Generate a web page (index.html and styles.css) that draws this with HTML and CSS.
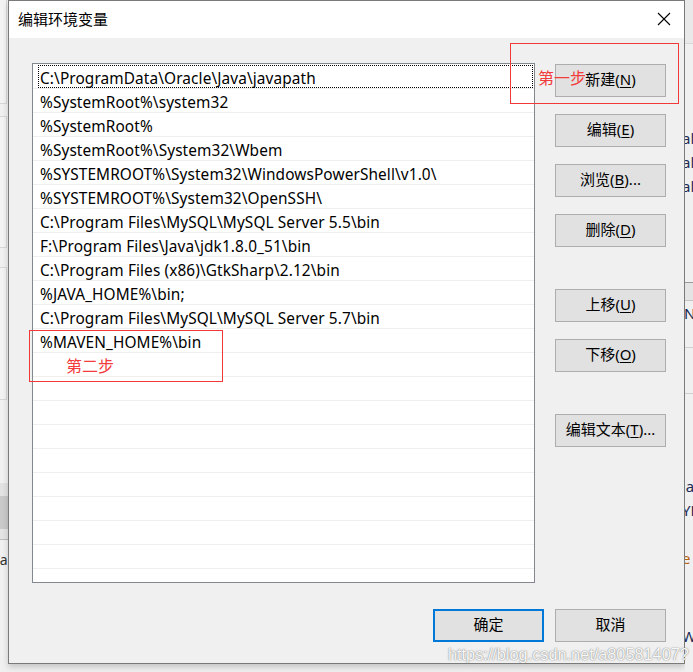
FILE: index.html
```html
<!DOCTYPE html>
<html lang="zh-CN">
<head>
<meta charset="utf-8">
<title>编辑环境变量</title>
<link rel="stylesheet" href="styles.css">
</head>
<body>
<div class="screen">
  <div class="bg-left">
    <div class="l-box l-box1"></div>
    <div class="l-box l-box2"></div>
    <div class="l-box l-box3"></div>
    <div class="l-band-light"></div>
    <div class="l-band-dark"></div>
    <div class="l-band-mid"></div>
    <div class="l-text">Ja</div>
  </div>

  <div class="dialog">
    <div class="titlebar">
      <span class="title">编辑环境变量</span>
      <svg class="close" width="14" height="14" viewBox="0 0 14 14"><path d="M1 1 L13 13 M13 1 L1 13" stroke="#000" stroke-width="1.1" fill="none"/></svg>
    </div>
    <div class="client">
      <div class="main">
        <div class="list">
          <div class="row focus"><div class="cell">C:\ProgramData\Oracle\Java\javapath</div></div>
          <div class="row"><div class="cell">%SystemRoot%\system32</div></div>
          <div class="row"><div class="cell">%SystemRoot%</div></div>
          <div class="row"><div class="cell">%SystemRoot%\System32\Wbem</div></div>
          <div class="row"><div class="cell">%SYSTEMROOT%\System32\WindowsPowerShell\v1.0\</div></div>
          <div class="row"><div class="cell">%SYSTEMROOT%\System32\OpenSSH\</div></div>
          <div class="row"><div class="cell">C:\Program Files\MySQL\MySQL Server 5.5\bin</div></div>
          <div class="row"><div class="cell">F:\Program Files\Java\jdk1.8.0_51\bin</div></div>
          <div class="row"><div class="cell">C:\Program Files (x86)\GtkSharp\2.12\bin</div></div>
          <div class="row"><div class="cell">%JAVA_HOME%\bin;</div></div>
          <div class="row"><div class="cell">C:\Program Files\MySQL\MySQL Server 5.7\bin</div></div>
          <div class="row"><div class="cell">%MAVEN_HOME%\bin</div></div>
          <div class="row"><div class="cell"></div></div>
          <div class="row"><div class="cell"></div></div>
          <div class="row"><div class="cell"></div></div>
          <div class="row"><div class="cell"></div></div>
          <div class="row"><div class="cell"></div></div>
          <div class="row"><div class="cell"></div></div>
          <div class="row"><div class="cell"></div></div>
          <div class="row"><div class="cell"></div></div>
          <div class="row"><div class="cell"></div></div>
          <div class="row"><div class="cell"></div></div>
        </div>
        <div class="btncol">
          <button class="btn">新建(<u>N</u>)</button>
          <button class="btn">编辑(<u>E</u>)</button>
          <button class="btn">浏览(<u>B</u>)...</button>
          <button class="btn">删除(<u>D</u>)</button>
          <button class="btn btn-sep">上移(<u>U</u>)</button>
          <button class="btn">下移(<u>O</u>)</button>
          <button class="btn btn-sep">编辑文本(<u>T</u>)...</button>
        </div>
      </div>
      <div class="footer">
        <button class="btn btn-primary">确定</button>
        <button class="btn">取消</button>
      </div>
    </div>
  </div>

  <div class="bg-right">
    <div class="r-top"></div>
    <div class="r-txt r-al1">al'</div>
    <div class="r-txt">al'</div>
    <div class="r-txt">al'</div>
    <div class="r-line r-line1"></div>
    <div class="r-band"></div>
    <div class="r-txt r-n">N</div>
    <div class="r-line r-line2"></div>
    <div class="r-line r-line3"></div>
    <div class="r-txt r-ja">ja</div>
    <div class="r-txt">YB</div>
    <div class="r-txt r-e">e</div>
    <div class="r-txt r-w">W</div>
  </div>

  <div class="anno anno-rect1"></div>
  <div class="anno-text anno-text1">第一步</div>
  <div class="anno anno-rect2"></div>
  <div class="anno-text anno-text2">第二步</div>
  <div class="watermark">https://blog.csdn.net/a80581407?</div>
</div>
</body>
</html>
```

FILE: styles.css
```css
* { box-sizing: border-box; }

html, body {
  margin: 0;
  padding: 0;
}

body {
  background: #f0f0f0;
  font-family: "Noto Sans", "Noto Sans CJK SC", sans-serif;
  color: #000;
}

.screen {
  position: relative;
  width: 693px;
  height: 672px;
  overflow: hidden;
  display: grid;
  grid-template-columns: 8px 677px 8px;
  align-items: start;
}

/* ---------- background windows ---------- */
.bg-left {
  height: 672px;
  display: flex;
  flex-direction: column;
  background: #f0f0f0;
  overflow: hidden;
}
.l-box {
  border: 1px solid #d6d6d6;
  border-left: none;
  width: 7px;
  background: #f3f3f3;
}
.l-box1 { height: 104px; border-top: none; }
.l-box2 { height: 132px; margin-top: 12px; }
.l-box3 { height: 133px; margin-top: 19px; }
.l-band-light { height: 13px; margin-top: 83px; background: #e2e2e2; }
.l-band-dark { height: 33px; background: #c9c9c9; }
.l-band-mid { height: 11px; background: #e4e4e4; border-bottom: 1px solid #bcbcbc; }
.l-text { font-size: 14px; line-height: 16px; margin-top: 12px; color: #333; margin-left: -4px; }

.bg-right {
  height: 672px;
  display: flex;
  flex-direction: column;
  background: #f0f0f0;
  overflow: hidden;
  font-family: "Noto Sans", sans-serif;
}
.r-top { height: 44px; border-bottom: 1px solid #d8d8d8; background: #e9e9e9; }
.r-txt { font-size: 15px; line-height: 24px; height: 24px; color: #1e2a55; white-space: nowrap; margin-left: -3px; }
.r-al1 { margin-top: 82px; }
.r-line { height: 1px; background: #9a9a9a; }
.r-line1 { margin-top: 84px; }
.r-band { height: 18px; background: #e4e4e4; border-bottom: 1px solid #c4c4c4; }
.r-n { margin-left: -1px; color: #14224f; }
.r-line2 { margin-top: 22px; background: #cfcfcf; }
.r-line3 { margin-top: 45px; background: #cfcfcf; }
.r-ja { margin-top: 80px; }
.r-e { margin-top: 24px; color: #b8630a; }
.r-w { margin-top: 54px; }

/* ---------- dialog ---------- */
.dialog {
  height: 664px;
  border: 1px solid #7a7a7a;
  background: #f0f0f0;
  display: flex;
  flex-direction: column;
  box-shadow: 0 3px 6px rgba(0, 0, 0, 0.18);
}

.titlebar {
  height: 37px;
  flex: none;
  background: #fff;
  display: flex;
  align-items: center;
  justify-content: space-between;
  padding: 0 13px 2px 9px;
}
.title {
  font-family: "Noto Sans CJK SC", sans-serif;
  font-size: 15px;
  line-height: 20px;
}
.close { display: block; }

.client {
  flex: 1;
  display: flex;
  flex-direction: column;
  padding: 25px 18px 0 23px;
}

.main {
  display: flex;
  gap: 20px;
  height: 520px;
}

.list {
  width: 503px;
  height: 520px;
  flex: none;
  border: 1px solid #828790;
  background: #fff;
  padding-top: 1px;
  overflow: hidden;
}
.row {
  height: 24px;
  border-bottom: 1px solid #efefef;
}
.cell {
  height: 23px;
  margin: 0 1px 0 5px;
  padding: 3px 0 0 1px;
  border: 1px solid transparent;
  font-size: 15.4px;
  letter-spacing: 0.1px;
  line-height: 20px;
  white-space: nowrap;
}
.row.focus .cell { border: 1px dotted #000; }

.btncol {
  width: 111px;
  flex: none;
  display: flex;
  flex-direction: column;
  gap: 17px;
  padding-top: 1px;
}

.btn {
  width: 111px;
  height: 33px;
  flex: none;
  background: #e1e1e1;
  border: 1px solid #adadad;
  border-radius: 0;
  font-family: "Noto Sans", "Noto Sans CJK SC", sans-serif;
  font-size: 15px;
  color: #000;
  padding: 0 0 3px 0;
  line-height: 20px;
}
.btn u { text-underline-offset: 2px; }
.btn-sep { margin-top: 25px; }

.btn-primary {
  border: 2px solid #0078d7;
}

.footer {
  display: flex;
  justify-content: flex-end;
  gap: 11px;
  margin-top: 26px;
}

/* ---------- annotations ---------- */
.anno {
  position: absolute;
  border: 1px solid #f03a3a;
}
.anno-rect1 { left: 510px; top: 43px; width: 169px; height: 61px; }
.anno-rect2 { left: 29px; top: 330px; width: 194px; height: 52px; }

.anno-text {
  position: absolute;
  font-family: "Noto Sans CJK SC", sans-serif;
  font-size: 16px;
  line-height: 18px;
  color: #f23b3b;
}
.anno-text1 { left: 538px; top: 68px; }
.anno-text2 { left: 66px; top: 356px; }

.watermark {
  position: absolute;
  left: 448px;
  top: 645px;
  font-family: "Liberation Sans", sans-serif;
  font-size: 16.3px;
  line-height: 19px;
  color: rgba(255, 255, 255, 0.95);
  text-shadow: 0 0 1px rgba(110, 110, 110, 0.9), 0 0 2px rgba(150, 150, 150, 0.6);
  white-space: nowrap;
}
```
